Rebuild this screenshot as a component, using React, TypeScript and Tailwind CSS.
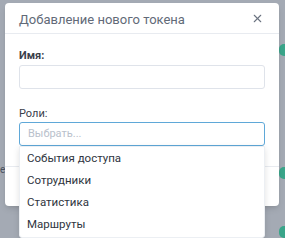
import { X } from "lucide-react";

const roles = ["События доступа", "Сотрудники", "Статистика", "Маршруты"];

export default function App() {
  return (
    <div
      className="relative w-[285px] h-[238px] overflow-hidden bg-[#a4aab4] pt-[3px] pl-[5px]"
      style={{ fontFamily: "Roboto, 'Noto Sans', sans-serif" }}
    >
      {/* page behind the backdrop */}
      <div className="absolute right-[-4px] top-[44px] w-[10px] h-[12px] rounded-full bg-[#3aa58a]" />
      <div className="absolute right-[-4px] top-[167px] w-[10px] h-[12px] rounded-full bg-[#3aa58a]" />
      <div className="absolute right-[-4px] top-[226px] w-[10px] h-[12px] rounded-full bg-[#3aa58a]" />
      <div className="absolute left-0 top-[162px] text-[10px] text-[#4b5260]">е</div>

      {/* Dialog panel */}
      <div className="relative w-[274px] h-[203px] flex flex-col rounded-[4px] bg-white shadow-md">
        <div className="flex items-center justify-between h-[31px] shrink-0 pl-[14px] pr-[15px] border-b border-[#e8ebf0]">
          <span className="text-[13px] text-[#626a78] mt-[4px]">Добавление нового токена</span>
          <X size={13} strokeWidth={2} className="text-[#6b7380] mt-[1px]" />
        </div>

        <div className="px-[14px] pt-[15px] flex flex-col">
          <div className="text-[11px] font-bold text-[#3a404b] leading-[14px]">Имя:</div>
          <div className="mt-[2px] h-[24px] rounded-[3px] border border-[#dfe3ea]" />

          <div className="mt-[18px] text-[11px] text-[#3a404b] leading-[14px]">Роли:</div>
          <div className="relative mt-[1px] z-10">
            <div className="h-[24px] rounded-[3px] border border-[#5fa8d8] flex items-center pl-[8px] text-[11px] text-[#b9c1cc]">
              Выбрать...
            </div>
            {/* Dropdown list */}
            <div className="absolute left-0 right-0 top-full pt-[1px] pb-[1px] rounded-b-[3px] bg-white border border-[#eceff3] shadow-[0_2px_6px_rgba(0,0,0,0.12)]">
              {roles.map((r) => (
                <div key={r} className="h-[22px] flex items-center pl-[7px] text-[11.5px] text-[#2f3540]">
                  {r}
                </div>
              ))}
            </div>
          </div>
        </div>

        <div className="mt-auto h-[40px] border-t border-[#e8ebf0]" />
      </div>
    </div>
  );
}
